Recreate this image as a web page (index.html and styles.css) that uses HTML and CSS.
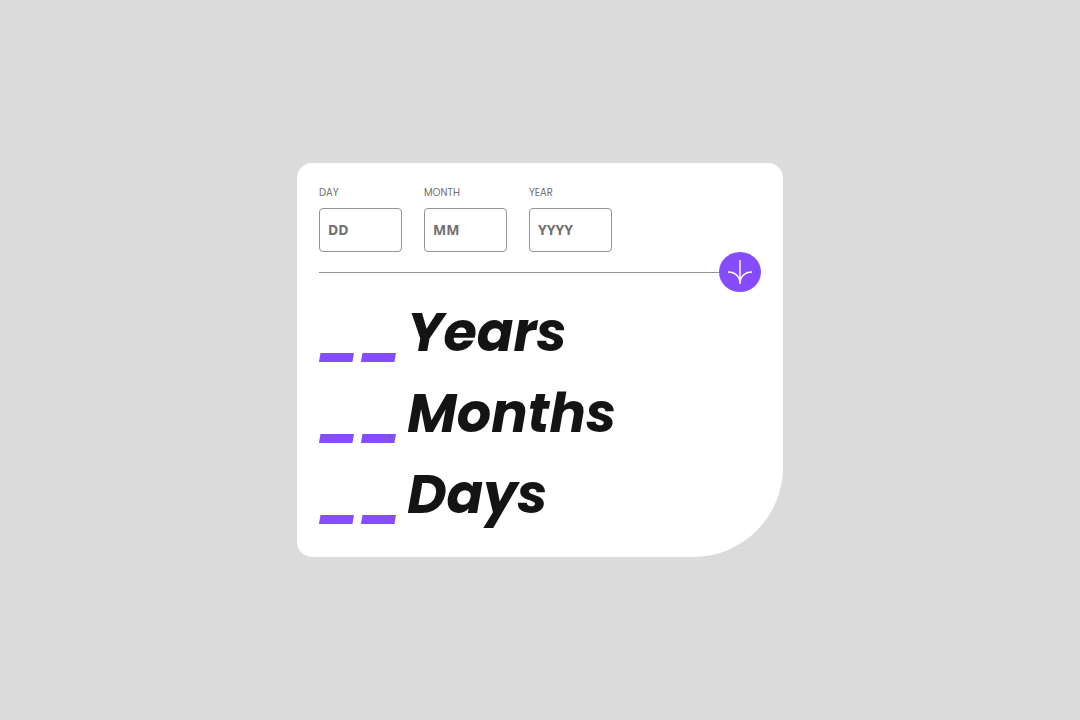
FILE: index.html
```
<!DOCTYPE html>
<html lang="en">
<head>
    <meta charset="UTF-8">
    <meta name="viewport" content="width=device-width, initial-scale=1.0">
    <title>Age calculator</title>
    <link rel="stylesheet" href="styles.css">
</head>
<body>
    <main class="card">
        <form>
            <div class="fields">
                <div class="field">
                    <label for="day">DAY</label>
                    <input type="text" id="day" placeholder="DD">
                </div>
                <div class="field">
                    <label for="month">MONTH</label>
                    <input type="text" id="month" placeholder="MM">
                </div>
                <div class="field">
                    <label for="year">YEAR</label>
                    <input type="text" id="year" placeholder="YYYY">
                </div>
            </div>
            <div class="divider">
                <div class="line"></div>
                <button type="button" class="submit" aria-label="Calculate age">
                    <svg viewBox="0 0 46 44" fill="none" stroke="#fff" stroke-width="2.6"><path d="M1 22.019C8.333 21.686 23 25.616 23 44M23 44V0M45 22.019C37.667 21.686 23 25.616 23 44"/></svg>
                </button>
            </div>
        </form>

        <div class="results">
            <div class="result">
                <span class="value">__</span>
                <span>Years</span>
            </div>
            <div class="result">
                <span class="value">__</span>
                <span>Months</span>
            </div>
            <div class="result">
                <span class="value">__</span>
                <span>Days</span>
            </div>
        </div>
    </main>
</body>
</html>
```
FILE: styles.css
```
* {
    box-sizing: border-box;
}

body {
    margin: 0;
    min-height: 100vh;
    display: flex;
    justify-content: center;
    align-items: center;
    background-color: #dbdbdb;
    font-family: Poppins, Inter, sans-serif;
}

.card {
    width: 45%;
    min-width: 380px;
    padding: 22px;
    background-color: white;
    border-radius: 15px 15px 90px 15px;
}

.fields {
    display: flex;
    gap: 22px;
}

.field {
    width: 83px;
    display: flex;
    flex-direction: column;
    gap: 7px;
}

.field label {
    font-size: 10px;
    line-height: 16px;
    color: #716f6f;
}

.field input {
    width: 100%;
    height: 44px;
    padding: 0 8px 2px;
    border: 1px solid #949494;
    border-radius: 4px;
    font-family: "Noto Sans", sans-serif;
    font-size: 14px;
    font-weight: bold;
    color: #141414;
}

.field input::placeholder {
    color: #716f6f;
    opacity: 1;
}

.divider {
    display: flex;
    align-items: center;
}

.line {
    flex: 1;
    height: 1px;
    background-color: #949494;
}

.submit {
    width: 42px;
    height: 40px;
    padding: 0;
    border: none;
    border-radius: 50%;
    background-color: #854dff;
    display: flex;
    justify-content: center;
    align-items: center;
    cursor: pointer;
}

.submit:hover {
    background-color: #141414;
}

.submit svg {
    width: 26px;
    height: 24px;
}

.results {
    font-size: 54px;
    font-style: italic;
    font-weight: 700;
    line-height: 81px;
    color: #141414;
}

.result {
    display: flex;
    gap: 4px;
}

.value {
    color: #854dff;
}
```
